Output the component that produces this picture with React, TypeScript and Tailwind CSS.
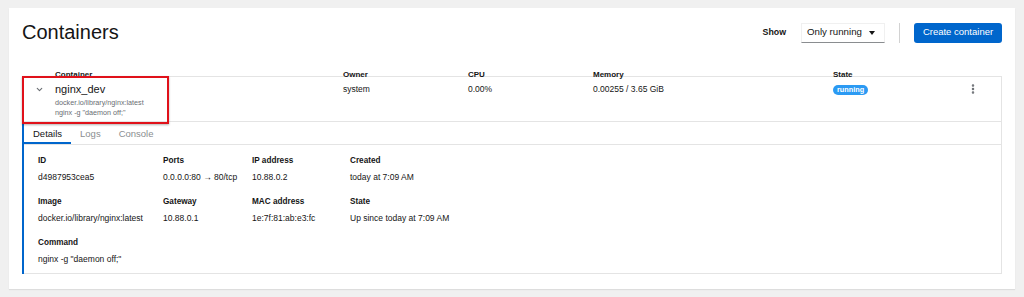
import { ChevronDown, EllipsisVertical } from "lucide-react";

const font = { fontFamily: '"Liberation Sans", Arial, sans-serif' };

function Detail({ label, value }: { label: string; value: string }) {
    return (
        <div>
            <div className="text-[8.2px] font-bold leading-[12px] text-[#151515]">{label}</div>
            <div className="mt-[4px] whitespace-nowrap text-[8.5px] leading-[12px] text-[#151515]">{value}</div>
        </div>
    );
}

export default function App() {
    return (
        <div className="h-[297px] w-[1024px] bg-[#f0f0f0] px-[9px] py-[8px]" style={font}>
            <div className="h-[281px] w-[1006px] bg-white px-[13px] pt-[14px] shadow-[0_1px_1px_rgba(0,0,0,0.08)]">
                {/* Toolbar */}
                <div className="flex h-[21px] items-center">
                    <h1 className="text-[20px] leading-[21px] text-[#151515]">Containers</h1>
                    <div className="ml-auto flex items-center">
                        <span className="mr-[15px] text-[8.8px] font-bold text-[#151515]">Show</span>
                        <div className="flex h-[20px] w-[84px] items-center border border-[#f0f0f0] border-b-[#8a8d90] pl-[5px] pr-[9px] text-[9.7px] text-[#151515]">
                            <span>Only running</span>
                            <span className="ml-auto h-0 w-0 border-x-[3px] border-t-[4px] border-x-transparent border-t-[#151515]" />
                        </div>
                        <div className="mx-[14px] h-[20px] w-px bg-[#d2d2d2]" />
                        <button className="h-[20px] w-[88px] rounded-[3px] bg-[#0066cc] text-[9.5px] text-white">
                            Create container
                        </button>
                    </div>
                </div>

                {/* Table header */}
                <div className="grid h-[34px] grid-cols-[33px_288px_125px_125px_240px_1fr] border-b border-[#e4e4e4] pt-[27px] text-[8px] font-bold leading-[10px] text-[#151515]">
                    <div />
                    <div>Container</div>
                    <div>Owner</div>
                    <div>CPU</div>
                    <div>Memory</div>
                    <div>State</div>
                </div>

                {/* Expanded row */}
                <div className="relative h-[197px] border-x border-b border-[#e4e4e4]">
                    <div className="absolute left-[-1px] top-0 bottom-[-1px] w-[2px] bg-[#0066cc]" />
                    <div className="grid h-[45px] grid-cols-[32px_288px_125px_125px_240px_1fr] border-b border-[#e4e4e4]">
                        <div className="flex justify-center pt-[8px]">
                            <ChevronDown className="h-[9px] w-[9px] text-[#6a6e73]" strokeWidth={3} />
                        </div>
                        <div className="pt-[5px]">
                            <div className="text-[11px] leading-[14px] text-[#151515]">nginx_dev</div>
                            <div className="mt-[2px] text-[7.2px] leading-[10px] text-[#6a6e73]">docker.io/library/nginx:latest</div>
                            <div className="text-[7.2px] leading-[10px] text-[#6a6e73]">nginx -g "daemon off;"</div>
                        </div>
                        <div className="pt-[6px] text-[8.5px] leading-[12px] text-[#151515]">system</div>
                        <div className="pt-[6px] text-[8.5px] leading-[12px] text-[#151515]">0.00%</div>
                        <div className="pt-[6px] text-[8.5px] leading-[12px] text-[#151515]">0.00255 / 3.65 GiB</div>
                        <div className="flex items-start justify-between pt-[8px] pr-[22px]">
                            <span className="rounded-full bg-[#2b9af3] px-[4px] text-[7.3px] font-bold leading-[10px] text-white">
                                running
                            </span>
                            <EllipsisVertical className="mt-[-2px] h-[12px] w-[12px] text-[#6a6e73]" strokeWidth={3} />
                        </div>
                    </div>

                    {/* Tabs */}
                    <div className="flex h-[23px] border-b border-[#e4e4e4] pl-[1px] pt-[2px] text-[9.5px] leading-[19px]">
                        <div className="border-b-2 border-[#0066cc] px-[9px] text-[#151515]">Details</div>
                        <div className="px-[9px] text-[#8a8d90]">Logs</div>
                        <div className="px-[9px] text-[#8a8d90]">Console</div>
                    </div>

                    {/* Details */}
                    <div className="grid grid-cols-[125px_89px_98px_1fr] gap-y-[13px] pl-[15px] pt-[10px]">
                        <Detail label="ID" value="d4987953cea5" />
                        <Detail label="Ports" value="0.0.0.0:80 → 80/tcp" />
                        <Detail label="IP address" value="10.88.0.2" />
                        <Detail label="Created" value="today at 7:09 AM" />
                        <Detail label="Image" value="docker.io/library/nginx:latest" />
                        <Detail label="Gateway" value="10.88.0.1" />
                        <Detail label="MAC address" value="1e:7f:81:ab:e3:fc" />
                        <Detail label="State" value="Up since today at 7:09 AM" />
                        <Detail label="Command" value={'nginx -g "daemon off;"'} />
                    </div>

                    {/* Highlight annotation */}
                    <div className="absolute left-[-1px] top-[-1px] h-[48px] w-[147px] border-2 border-[#e0111a] shadow-[0_1px_2px_rgba(0,0,0,0.3)]" />
                </div>
            </div>
        </div>
    );
}
